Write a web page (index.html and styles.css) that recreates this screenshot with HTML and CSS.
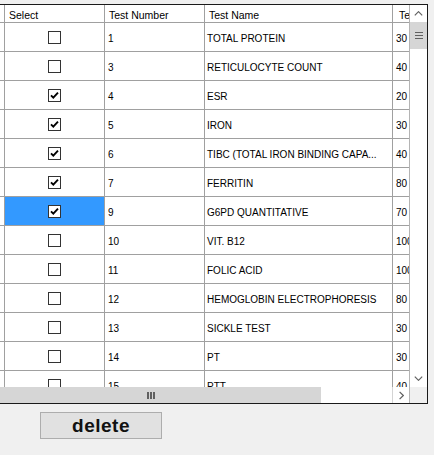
FILE: index.html
```html
<!DOCTYPE html>
<html>
<head>
<meta charset="utf-8">
<link rel="stylesheet" href="styles.css">
</head>
<body>
<div class="frame">
  <div class="viewport">
    <div class="row head">
      <div class="cell rh"></div>
      <div class="cell h">Select</div>
      <div class="cell h">Test Number</div>
      <div class="cell h">Test Name</div>
      <div class="cell h te">Te</div>
    </div>
    <div class="row">
      <div class="cell rh"></div>
      <div class="cell sel-col"><span class="box"></span></div>
      <div class="cell num">1</div>
      <div class="cell name">TOTAL PROTEIN</div>
      <div class="cell price">30</div>
    </div>
    <div class="row">
      <div class="cell rh"></div>
      <div class="cell sel-col"><span class="box"></span></div>
      <div class="cell num">3</div>
      <div class="cell name">RETICULOCYTE COUNT</div>
      <div class="cell price">40</div>
    </div>
    <div class="row">
      <div class="cell rh"></div>
      <div class="cell sel-col"><span class="box"><svg class="tick" viewBox="0 0 11 11"><polyline points="2,5.3 4.3,7.6 9,2.6"/></svg></span></div>
      <div class="cell num">4</div>
      <div class="cell name">ESR</div>
      <div class="cell price">20</div>
    </div>
    <div class="row">
      <div class="cell rh"></div>
      <div class="cell sel-col"><span class="box"><svg class="tick" viewBox="0 0 11 11"><polyline points="2,5.3 4.3,7.6 9,2.6"/></svg></span></div>
      <div class="cell num">5</div>
      <div class="cell name">IRON</div>
      <div class="cell price">30</div>
    </div>
    <div class="row">
      <div class="cell rh"></div>
      <div class="cell sel-col"><span class="box"><svg class="tick" viewBox="0 0 11 11"><polyline points="2,5.3 4.3,7.6 9,2.6"/></svg></span></div>
      <div class="cell num">6</div>
      <div class="cell name">TIBC (TOTAL IRON BINDING CAPA...</div>
      <div class="cell price">40</div>
    </div>
    <div class="row">
      <div class="cell rh"></div>
      <div class="cell sel-col"><span class="box"><svg class="tick" viewBox="0 0 11 11"><polyline points="2,5.3 4.3,7.6 9,2.6"/></svg></span></div>
      <div class="cell num">7</div>
      <div class="cell name">FERRITIN</div>
      <div class="cell price">80</div>
    </div>
    <div class="row">
      <div class="cell rh"></div>
      <div class="cell sel-col selected"><span class="box"><svg class="tick" viewBox="0 0 11 11"><polyline points="2,5.3 4.3,7.6 9,2.6"/></svg></span></div>
      <div class="cell num">9</div>
      <div class="cell name">G6PD QUANTITATIVE</div>
      <div class="cell price">70</div>
    </div>
    <div class="row">
      <div class="cell rh"></div>
      <div class="cell sel-col"><span class="box"></span></div>
      <div class="cell num">10</div>
      <div class="cell name">VIT. B12</div>
      <div class="cell price">100</div>
    </div>
    <div class="row">
      <div class="cell rh"></div>
      <div class="cell sel-col"><span class="box"></span></div>
      <div class="cell num">11</div>
      <div class="cell name">FOLIC ACID</div>
      <div class="cell price">100</div>
    </div>
    <div class="row">
      <div class="cell rh"></div>
      <div class="cell sel-col"><span class="box"></span></div>
      <div class="cell num">12</div>
      <div class="cell name">HEMOGLOBIN ELECTROPHORESIS</div>
      <div class="cell price">80</div>
    </div>
    <div class="row">
      <div class="cell rh"></div>
      <div class="cell sel-col"><span class="box"></span></div>
      <div class="cell num">13</div>
      <div class="cell name">SICKLE TEST</div>
      <div class="cell price">30</div>
    </div>
    <div class="row">
      <div class="cell rh"></div>
      <div class="cell sel-col"><span class="box"></span></div>
      <div class="cell num">14</div>
      <div class="cell name">PT</div>
      <div class="cell price">30</div>
    </div>
    <div class="row">
      <div class="cell rh"></div>
      <div class="cell sel-col"><span class="box"></span></div>
      <div class="cell num">15</div>
      <div class="cell name">PTT</div>
      <div class="cell price">40</div>
    </div>
  </div>
  <div class="vscroll">
    <div class="arrow"><svg width="9" height="5" viewBox="0 0 9 5"><polyline points="0.8,4.4 4.5,0.7 8.2,4.4"/></svg></div>
    <div class="vthumb"><span class="hline"></span><span class="hline"></span><span class="hline"></span></div>
    <div class="track"></div>
    <div class="arrow"><svg width="9" height="5" viewBox="0 0 9 5"><polyline points="0.8,0.6 4.5,4.3 8.2,0.6"/></svg></div>
  </div>
  <div class="hscroll">
    <div class="hthumb"><span class="vline"></span><span class="vline"></span><span class="vline"></span></div>
    <div class="track"></div>
    <div class="harrow"><svg width="5" height="9" viewBox="0 0 5 9"><polyline points="0.6,0.8 4.3,4.5 0.6,8.2"/></svg></div>
  </div>
  <div class="corner"></div>
</div>
<div class="actions">
  <button class="btn">delete</button>
</div>
</body>
</html>
```

FILE: styles.css
```css
* {
  box-sizing: border-box;
}

body {
  margin: 0;
  width: 434px;
  height: 455px;
  overflow: hidden;
  background: #f0f0f0;
  font-family: "Liberation Sans", Arial, sans-serif;
}

.frame {
  margin-top: 4px;
  width: 428px;
  height: 400px;
  border-top: 1px solid #1a1a1a;
  border-right: 1px solid #1a1a1a;
  border-bottom: 1px solid #1a1a1a;
  display: grid;
  grid-template-columns: 409px 18px;
  grid-template-rows: 382px 16px;
}

.viewport {
  overflow: hidden;
  background: #fff;
}

.row {
  display: grid;
  grid-template-columns: 5px 100px 100px 188px 60px;
  height: 29px;
}

.row.head {
  height: 18px;
}

.cell {
  border-right: 1px solid #a0a0a0;
  border-bottom: 1px solid #a0a0a0;
  overflow: hidden;
  white-space: nowrap;
  font-size: 10px;
  color: #000;
  padding-top: 4px;
  line-height: 24px;
}

.cell.h {
  padding-top: 4px;
  line-height: 13px;
  padding-left: 4px;
  font-size: 10.5px;
  color: #000;
}

.cell.h.te {
  padding-left: 6px;
}

.cell.rh {
  padding: 0;
}

.cell.num {
  padding-left: 3px;
}

.cell.name {
  padding-left: 2px;
}

.cell.price {
  padding-left: 3px;
}

.sel-col {
  padding: 0;
  display: flex;
  align-items: center;
  justify-content: center;
}

.sel-col.selected {
  background: #3399ff;
}

.box {
  width: 13px;
  height: 13px;
  border: 1px solid #333;
  background: #fff;
  display: flex;
}

.tick {
  width: 11px;
  height: 11px;
}

.tick polyline {
  fill: none;
  stroke: #000;
  stroke-width: 1.9;
}

.vscroll {
  border-left: 1px solid #b4b4b4;
  background: #fff;
  display: flex;
  flex-direction: column;
}

.arrow {
  height: 17px;
  display: flex;
  align-items: center;
  justify-content: center;
}

.arrow svg,
.harrow svg {
  display: block;
}

.arrow svg polyline,
.harrow svg polyline {
  fill: none;
  stroke: #606060;
  stroke-width: 1.2;
}

.vthumb {
  height: 27px;
  background: #d6d6d6;
  display: flex;
  flex-direction: column;
  align-items: center;
  justify-content: center;
  gap: 2px;
}

.hline {
  width: 8px;
  height: 1px;
  background: #606060;
}

.track {
  flex: 1;
}

.hscroll {
  background: #fff;
  display: flex;
}

.hthumb {
  width: 321px;
  background: #d6d6d6;
  display: flex;
  align-items: center;
  gap: 1px;
  padding-left: 147px;
}

.vline {
  width: 2px;
  height: 7px;
  background: #606060;
}

.harrow {
  width: 17px;
  border-left: 1px solid #d4d4d4;
  display: flex;
  align-items: center;
  justify-content: center;
}

.corner {
  border-left: 1px solid #b4b4b4;
  background: #f0f0f0;
}

.actions {
  padding: 8px 0 0 40px;
}

.btn {
  width: 122px;
  height: 27px;
  padding: 0;
  margin: 0;
  background: #e1e1e1;
  border: 1px solid #adadad;
  border-radius: 0;
  font-family: "Liberation Sans", Arial, sans-serif;
  font-weight: bold;
  font-size: 19px;
  letter-spacing: 0.5px;
  line-height: 25px;
  color: #111;
  display: block;
}
```
